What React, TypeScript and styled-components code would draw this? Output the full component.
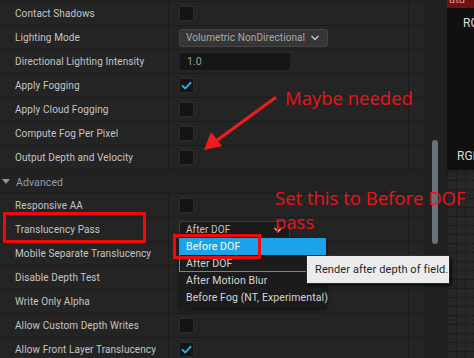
import React from "react";
import styled, { createGlobalStyle } from "styled-components";

const GlobalStyle = createGlobalStyle`
  html, body {
    margin: 0;
    padding: 0;
    background: #1f1f1f;
  }
  * {
    box-sizing: border-box;
  }
`;

type Value =
  | { kind: "check"; on?: boolean }
  | { kind: "combo"; text: string; wide?: boolean }
  | { kind: "number"; text: string }
  | { kind: "header" };

const rows: { label: string; value: Value }[] = [
  { label: "Contact Shadows", value: { kind: "check" } },
  { label: "Lighting Mode", value: { kind: "combo", text: "Volumetric NonDirectional", wide: true } },
  { label: "Directional Lighting Intensity", value: { kind: "number", text: "1.0" } },
  { label: "Apply Fogging", value: { kind: "check", on: true } },
  { label: "Apply Cloud Fogging", value: { kind: "check" } },
  { label: "Compute Fog Per Pixel", value: { kind: "check" } },
  { label: "Output Depth and Velocity", value: { kind: "check" } },
  { label: "Advanced", value: { kind: "header" } },
  { label: "Responsive AA", value: { kind: "check" } },
  { label: "Translucency Pass", value: { kind: "combo", text: "After DOF" } },
  { label: "Mobile Separate Translucency", value: { kind: "check" } },
  { label: "Disable Depth Test", value: { kind: "check" } },
  { label: "Write Only Alpha", value: { kind: "check" } },
  { label: "Allow Custom Depth Writes", value: { kind: "check" } },
  { label: "Allow Front Layer Translucency", value: { kind: "check", on: true } },
];

const menuItems = ["Before DOF", "After DOF", "After Motion Blur", "Before Fog (NT, Experimental)"];

function App() {
  return (
    <>
      <GlobalStyle />
      <Screen>
        <Details>
          <PropList>
            {rows.map((r) =>
              r.value.kind === "header" ? (
                <HeaderRow key={r.label}>
                  <Caret />
                  <HeaderLabel>{r.label}</HeaderLabel>
                </HeaderRow>
              ) : (
                <Row key={r.label}>
                  <Label>{r.label}</Label>
                  <ValueCell>{renderValue(r.value)}</ValueCell>
                  <ResetCell />
                </Row>
              )
            )}
          </PropList>
          <ScrollTrack>
            <ScrollThumb />
          </ScrollTrack>

          <Menu>
            {menuItems.map((m, i) => (
              <MenuItem key={m} $hot={i === 0} $current={i === 1}>
                {m}
              </MenuItem>
            ))}
          </Menu>
          <Tooltip>Render after depth of field.</Tooltip>

          <RedBox style={{ left: 3, top: 212, width: 143, height: 31 }} />
          <RedBox style={{ left: 173, top: 234, width: 88, height: 25 }} />
          <Note style={{ left: 285, top: 86 }}>Maybe needed</Note>
          <Note style={{ left: 275, top: 186, width: 200 }}>Set this to Before DOF pass</Note>
          <Arrow width="80" height="60" viewBox="0 0 80 60">
            <path d="M75 3 L16 46" stroke="#ee1c1c" strokeWidth="3.2" strokeLinecap="round" />
            <path d="M4 55 L11 37 L22 51 Z" fill="#ee1c1c" />
          </Arrow>
        </Details>

        <Graph>
          <Node>
            <NodeTitle>utd</NodeTitle>
            <Pin>RG</Pin>
            <Pin $bottom>RGB</Pin>
          </Node>
        </Graph>
      </Screen>
    </>
  );
}

function renderValue(v: Value) {
  if (v.kind === "check") {
    return (
      <Check>
        {v.on && (
          <svg width="11" height="11" viewBox="0 0 11 11">
            <path d="M1.5 5.8 L4.3 8.5 L9.6 2.6" fill="none" stroke="#26b4f5" strokeWidth="1.8" strokeLinecap="round" strokeLinejoin="round" />
          </svg>
        )}
      </Check>
    );
  }
  if (v.kind === "combo") {
    return (
      <Combo $wide={v.wide}>
        <ComboText>{v.text}</ComboText>
        <svg width="10" height="8" viewBox="0 0 10 8">
          <path d="M1.5 2 L5 5.5 L8.5 2" fill="none" stroke="#c8c8c8" strokeWidth="1.4" />
        </svg>
      </Combo>
    );
  }
  if (v.kind === "number") {
    return <NumberBox>{v.text}</NumberBox>;
  }
  return null;
}

const Screen = styled.div`
  width: 474px;
  height: 358px;
  overflow: hidden;
  display: flex;
  background: #242424;
  font-family: Roboto, "Noto Sans", sans-serif;
  letter-spacing: 0.1px;
`;

const Details = styled.div`
  position: relative;
  width: 447px;
  display: flex;
  background: #242424;
`;

const PropList = styled.div`
  width: 425px;
  padding-top: 1px;
  display: flex;
  flex-direction: column;
`;

const Row = styled.div`
  height: 24px;
  flex: none;
  display: grid;
  grid-template-columns: 168px 1fr 17px;
  border-top: 1px solid #1b1b1b;
`;

const HeaderRow = styled.div`
  height: 24px;
  flex: none;
  display: flex;
  align-items: center;
  border-top: 1px solid #1b1b1b;
  background: #222222;
`;

const Caret = styled.span`
  width: 0;
  height: 0;
  margin: 0 6px 0 2px;
  border-left: 4px solid transparent;
  border-right: 4px solid transparent;
  border-top: 5px solid #8a96a6;
`;

const HeaderLabel = styled.span`
  font-size: 10.5px;
  color: #8f9eb3;
  padding-top: 1px;
`;

const Label = styled.div`
  display: flex;
  align-items: center;
  padding-left: 15px;
  font-size: 10px;
  color: #c4c4c4;
  white-space: nowrap;
`;

const ValueCell = styled.div`
  display: flex;
  align-items: center;
  padding-left: 10px;
  border-left: 1px solid #1b1b1b;
`;

const ResetCell = styled.div`
  border-left: 1px solid #1b1b1b;
`;

const Check = styled.div`
  width: 15px;
  height: 15px;
  border-radius: 2px;
  background: #131313;
  border: 1px solid #2c2c2c;
  display: flex;
  align-items: center;
  justify-content: center;
`;

const Combo = styled.div<{ $wide?: boolean }>`
  width: ${(p) => (p.$wide ? 149 : 111)}px;
  height: 18px;
  padding: 0 0 0 6px;
  border-radius: 3px;
  display: flex;
  align-items: center;
  gap: ${(p) => (p.$wide ? 5 : 0)}px;
  font-size: 10px;
  white-space: nowrap;
  color: ${(p) => (p.$wide ? "#a9a9a9" : "#c4c4c4")};
  background: ${(p) => (p.$wide ? "#363636" : "#1a1a1a")};
  border: 1px solid ${(p) => (p.$wide ? "#444" : "#3c3c3c")};
`;

const ComboText = styled.span`
  min-width: 87px;
`;

const NumberBox = styled.div`
  width: 110px;
  height: 17px;
  margin-left: 1px;
  padding-left: 7px;
  border-radius: 3px;
  background: #161616;
  display: flex;
  align-items: center;
  font-size: 10.5px;
  color: #9c9c9c;
`;

const ScrollTrack = styled.div`
  width: 22px;
  background: #202020;
  border-left: 1px solid #1b1b1b;
  padding: 140px 0 0 6px;
`;

const ScrollThumb = styled.div`
  width: 6px;
  height: 104px;
  border-radius: 3px;
  background: #6a7075;
`;

const Menu = styled.div`
  position: absolute;
  left: 179px;
  top: 237px;
  width: 147px;
  padding: 1px 0 2px;
  background: #1b1b1b;
  box-shadow: 0 2px 4px rgba(0, 0, 0, 0.5);
`;

const MenuItem = styled.div<{ $hot?: boolean; $current?: boolean }>`
  height: 17px;
  padding-left: 6px;
  display: flex;
  align-items: center;
  font-size: 10.5px;
  white-space: nowrap;
  color: ${(p) => (p.$hot ? "#ffffff" : "#d4d4d4")};
  background: ${(p) => (p.$hot ? "#1aa3e8" : "transparent")};
  border: 1px solid ${(p) => (p.$current ? "#1aa3e8" : "transparent")};
  border-top: none;
`;

const Tooltip = styled.div`
  position: absolute;
  left: 306px;
  top: 255px;
  width: 144px;
  height: 29px;
  padding-left: 8px;
  display: flex;
  align-items: center;
  background: #ececec;
  border: 1px solid #2a2a2a;
  box-shadow: 2px 2px 2px rgba(0, 0, 0, 0.6);
  font-size: 11px;
  color: #1e1e1e;
  white-space: nowrap;
`;

const RedBox = styled.div`
  position: absolute;
  border: 3px solid #f2070d;
`;

const Note = styled.div`
  position: absolute;
  font-family: "Open Sans", sans-serif;
  font-size: 18.5px;
  line-height: 24px;
  letter-spacing: 0;
  color: #e8141a;
  white-space: normal;
`;

const Arrow = styled.svg`
  position: absolute;
  left: 200px;
  top: 95px;
`;

const Graph = styled.div`
  flex: 1;
  background-color: #262626;
  background-image: linear-gradient(#1c1c1c 1px, transparent 1px),
    linear-gradient(90deg, #1c1c1c 1px, transparent 1px);
  background-size: 9px 9px;
`;

const Node = styled.div`
  position: relative;
  height: 170px;
  background: #101010;
  overflow: hidden;
`;

const NodeTitle = styled.div`
  height: 8px;
  background: #6e1313;
  color: #d99;
  font-size: 11px;
  line-height: 0;
  padding-left: 2px;
  overflow: hidden;
`;

const Pin = styled.div<{ $bottom?: boolean }>`
  position: absolute;
  left: ${(p) => (p.$bottom ? 10 : 16)}px;
  top: ${(p) => (p.$bottom ? 149 : 16)}px;
  font-size: 12px;
  color: #dcdcdc;
  white-space: nowrap;
`;

export default App;
